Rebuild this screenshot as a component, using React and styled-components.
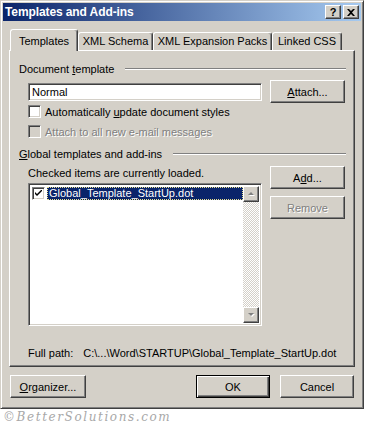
import React from 'react';
import styled, { createGlobalStyle, css } from 'styled-components';

const FACE = '#D4D0C8';
const SHADOW = '#808080';
const DARK = '#404040';
const SEL = '#0A246A';

const GlobalStyle = createGlobalStyle`
  html, body { margin: 0; padding: 0; background: #fff; }
  body {
    font-family: "Liberation Sans", Arial, sans-serif;
    font-size: 11px;
    color: #000;
  }
  * { box-sizing: border-box; }
`;

const raised = css`
  border: 1px solid;
  border-color: #fff ${DARK} ${DARK} #fff;
  box-shadow: inset -1px -1px ${SHADOW}, inset 1px 1px ${FACE};
`;

const sunken = css`
  border: 1px solid;
  border-color: ${SHADOW} #fff #fff ${SHADOW};
  box-shadow: inset 1px 1px ${DARK}, inset -1px -1px ${FACE};
`;

const Window = styled.div`
  width: 364px;
  height: 409px;
  background: ${FACE};
  border: 1px solid;
  border-color: ${FACE} ${DARK} ${DARK} ${FACE};
  box-shadow: inset 1px 1px #fff, inset -1px -1px ${SHADOW};
  padding: 2px;
  display: flex;
  flex-direction: column;
`;

const TitleBar = styled.div`
  height: 18px;
  display: flex;
  align-items: center;
  justify-content: space-between;
  padding: 0 2px 0 2px;
  background: linear-gradient(to right, #0A246A, #A6CAF0);
  color: #fff;
  font-weight: bold;
  font-size: 12px;
`;

const TitleText = styled.span`
  letter-spacing: -0.1px;
`;

const TitleButtons = styled.div`
  display: flex;
  gap: 2px;
`;

const TitleBtn = styled.div`
  width: 16px;
  height: 14px;
  ${raised};
  background: ${FACE};
  color: #000;
  display: flex;
  align-items: center;
  justify-content: center;
  font-size: 11px;
  font-weight: bold;
  line-height: 1;
`;

const Body = styled.div`
  flex: 1;
  display: flex;
  flex-direction: column;
  padding: 8px 6px 8px 6px;
`;

const TabRow = styled.div`
  display: flex;
  align-items: flex-end;
  height: 21px;
  padding-left: 1px;
  position: relative;
  z-index: 1;
`;

const Tab = styled.div`
  width: ${(p) => p.$w}px;
  height: ${(p) => (p.$active ? 22 : 18)}px;
  margin-bottom: ${(p) => (p.$active ? -1 : 0)}px;
  background: ${FACE};
  border-left: 1px solid #fff;
  border-top: 1px solid #fff;
  border-right: 1px solid ${DARK};
  box-shadow: inset -1px 0 ${SHADOW};
  border-radius: 3px 3px 0 0;
  text-align: center;
  line-height: 13px;
  padding-top: ${(p) => (p.$active ? 5 : 2)}px;
`;

const Panel = styled.div`
  width: 346px;
  height: 317px;
  border: 1px solid;
  border-color: #fff ${DARK} ${DARK} #fff;
  box-shadow: inset -1px -1px ${SHADOW};
  padding: 11px 8px 0 9px;
  display: flex;
  flex-direction: column;
`;

const GroupHeader = styled.div`
  display: flex;
  align-items: center;
  height: 13px;
  gap: 11px;
  margin-top: ${(p) => p.$mt || 0}px;
`;

const EtchedLine = styled.div`
  flex: 1;
  height: 2px;
  border-top: 1px solid ${SHADOW};
  border-bottom: 1px solid #fff;
`;

const Key = styled.span`
  text-decoration: underline;
  text-underline-offset: 1px;
`;

const TemplateRow = styled.div`
  display: flex;
  align-items: center;
  justify-content: space-between;
  height: 23px;
  margin: 5px 0 0 9px;
`;

const TextInput = styled.div`
  width: 234px;
  height: 18px;
  ${sunken};
  background: #fff;
  padding: 0 3px;
  line-height: 16px;
`;

const Button = styled.div`
  width: ${(p) => p.$w || 75}px;
  height: 23px;
  background: ${FACE};
  display: flex;
  align-items: center;
  justify-content: center;
  ${(p) =>
    p.$default
      ? css`
          border: 1px solid #000;
          box-shadow: inset 1px 1px #fff, inset -1px -1px ${DARK}, inset -2px -2px ${SHADOW};
        `
      : raised};
  ${(p) =>
    p.$disabled &&
    css`
      color: ${SHADOW};
      text-shadow: 1px 1px #fff;
    `};
  margin-right: ${(p) => p.$mr || 0}px;
  margin-left: ${(p) => p.$ml || 0}px;
`;

const CheckRow = styled.label`
  display: flex;
  align-items: center;
  gap: 4px;
  height: 13px;
  margin: ${(p) => p.$mt}px 0 0 9px;
  ${(p) =>
    p.$disabled &&
    css`
      color: ${SHADOW};
      text-shadow: 1px 1px #fff;
    `};
`;

const Box = styled.span`
  width: 13px;
  height: 13px;
  flex: none;
  ${sunken};
  background: ${(p) => (p.$disabled ? FACE : '#fff')};
  display: flex;
  align-items: center;
  justify-content: center;
`;

const GlobalArea = styled.div`
  display: flex;
  justify-content: space-between;
  margin: 6px 1px 0 9px;
`;

const LeftCol = styled.div`
  width: 234px;
  display: flex;
  flex-direction: column;
`;

const Hint = styled.div`
  height: 17px;
  line-height: 14px;
`;

const ListBox = styled.div`
  height: 143px;
  ${sunken};
  background: #fff;
  padding: 2px;
  display: flex;
`;

const Items = styled.div`
  flex: 1;
  display: flex;
  flex-direction: column;
  padding: 1px 0 0 1px;
`;

const Item = styled.div`
  display: flex;
  align-items: center;
  height: 13px;
`;

const ItemText = styled.span`
  flex: 1;
  margin-left: 2px;
  height: 13px;
  line-height: 11px;
  padding-left: 1px;
  background: ${SEL};
  color: #fff;
  border: 1px dotted #E8E090;
`;

const ScrollBar = styled.div`
  width: 16px;
  display: flex;
  flex-direction: column;
  justify-content: space-between;
  background: repeating-conic-gradient(#fff 0 25%, ${FACE} 0 50%) 0 0 / 2px 2px;
`;

const ScrollBtn = styled.div`
  width: 16px;
  height: 16px;
  ${raised};
  background: ${FACE};
  display: flex;
  align-items: center;
  justify-content: center;
`;

const RightCol = styled.div`
  display: flex;
  flex-direction: column;
  gap: 7px;
`;

const FullPath = styled.div`
  display: flex;
  gap: 10px;
  margin: 21px 0 0 9px;
  line-height: 13px;
`;

const Footer = styled.div`
  display: flex;
  align-items: center;
  margin-top: 8px;
  padding: 0 1px;
`;

const Spacer = styled.div`
  flex: 1;
`;

const Watermark = styled.div`
  margin: 2px 0 0 3px;
  font-family: "DejaVu Serif", serif;
  font-style: italic;
  font-size: 12px;
  letter-spacing: 1.6px;
  color: #a8a8a8;
  line-height: 13px;
`;

const Arrow = ({ up }) => (
  <svg width="7" height="5" viewBox="0 0 7 5">
    <polygon points={up ? '4,1 1,4 7,4' : '1,1 7,1 4,4'} fill="#fff" />
    <polygon points={up ? '3,0 0,3 6,3' : '0,0 6,0 3,3'} fill={SHADOW} />
  </svg>
);

const Check = () => (
  <svg width="7" height="7" viewBox="0 0 7 7">
    <path d="M0 2 L0 4 L2 6 L7 1 L7 -1 L2 4 Z" fill="#000" />
  </svg>
);

const CloseGlyph = () => (
  <svg width="8" height="7" viewBox="0 0 8 7">
    <path d="M0 0 L2 0 L4 2 L6 0 L8 0 L5 3.5 L8 7 L6 7 L4 5 L2 7 L0 7 L3 3.5 Z" fill="#000" />
  </svg>
);

export default function App() {
  return (
    <>
      <GlobalStyle />
      <Window>
        <TitleBar>
          <TitleText>Templates and Add-ins</TitleText>
          <TitleButtons>
            <TitleBtn>?</TitleBtn>
            <TitleBtn>
              <CloseGlyph />
            </TitleBtn>
          </TitleButtons>
        </TitleBar>
        <Body>
          <TabRow>
            <Tab $w={68} $active>Templates</Tab>
            <Tab $w={75}>XML Schema</Tab>
            <Tab $w={119}>XML Expansion Packs</Tab>
            <Tab $w={70}>Linked CSS</Tab>
          </TabRow>
          <Panel>
            <GroupHeader>
              <span>
                Document <Key>t</Key>emplate
              </span>
              <EtchedLine />
            </GroupHeader>
            <TemplateRow>
              <TextInput>Normal</TextInput>
              <Button $mr={1}>
                <span>
                  <Key>A</Key>ttach...
                </span>
              </Button>
            </TemplateRow>
            <CheckRow $mt={2}>
              <Box />
              <span>
                Automatically <Key>u</Key>pdate document styles
              </span>
            </CheckRow>
            <CheckRow $mt={7} $disabled>
              <Box $disabled />
              <span>Attach to all new e-mail messages</span>
            </CheckRow>
            <GroupHeader $mt={9}>
              <span>
                <Key>G</Key>lobal templates and add-ins
              </span>
              <EtchedLine />
            </GroupHeader>
            <GlobalArea>
              <LeftCol>
                <Hint>Checked items are currently loaded.</Hint>
                <ListBox>
                  <Items>
                    <Item>
                      <Box>
                        <Check />
                      </Box>
                      <ItemText>Global_Template_StartUp.dot</ItemText>
                    </Item>
                  </Items>
                  <ScrollBar>
                    <ScrollBtn>
                      <Arrow up />
                    </ScrollBtn>
                    <ScrollBtn>
                      <Arrow />
                    </ScrollBtn>
                  </ScrollBar>
                </ListBox>
              </LeftCol>
              <RightCol>
                <Button>
                  <span>
                    A<Key>d</Key>d...
                  </span>
                </Button>
                <Button $disabled>Remove</Button>
              </RightCol>
            </GlobalArea>
            <FullPath>
              <span>Full path:</span>
              <span>C:\...\Word\STARTUP\Global_Template_StartUp.dot</span>
            </FullPath>
          </Panel>
          <Footer>
            <Button $w={76}>
              <span>
                <Key>O</Key>rganizer...
              </span>
            </Button>
            <Spacer />
            <Button $w={74} $default>
              OK
            </Button>
            <Button $w={74} $ml={10}>
              Cancel
            </Button>
          </Footer>
        </Body>
      </Window>
      <Watermark>©BetterSolutions.com</Watermark>
    </>
  );
}
